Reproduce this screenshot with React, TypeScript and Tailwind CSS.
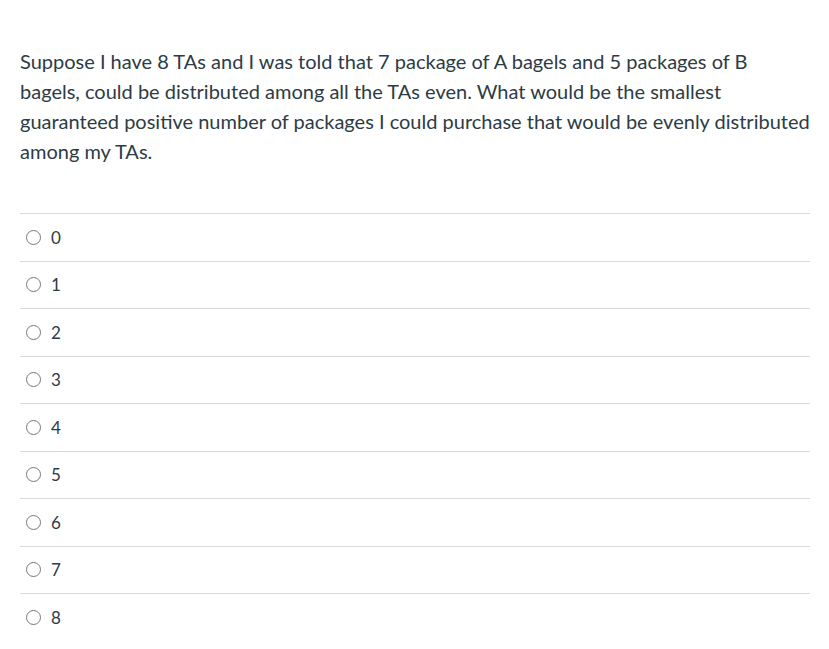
export default function App() {
  const options = ['0', '1', '2', '3', '4', '5', '6', '7', '8']
  return (
    <div className="min-h-screen bg-white text-[#2d3b45] font-['Lato',sans-serif]">
      <div className="px-5 pt-[46px] w-[830px]">
        {/* Question */}
        <p className="text-[20px] leading-[30px] w-[800px] whitespace-nowrap">
          Suppose I have 8 TAs and I was told that 7 package of A bagels and 5 packages of B
          <br />
          bagels, could be distributed among all the TAs even. What would be the smallest
          <br />
          guaranteed positive number of packages I could purchase that would be evenly distributed
          <br />
          among my TAs.
        </p>

        {/* Answers */}
        <div className="mt-[47px] w-[790px]">
          {options.map((o) => (
            <div key={o} className="h-[47.5px] border-t border-[#dadada] flex items-center gap-[10px] pl-[6px]">
              <span className="w-[15px] h-[15px] rounded-full border border-[#777] bg-white" />
              <span className="text-[17px]">{o}</span>
            </div>
          ))}
        </div>
      </div>
    </div>
  )
}
